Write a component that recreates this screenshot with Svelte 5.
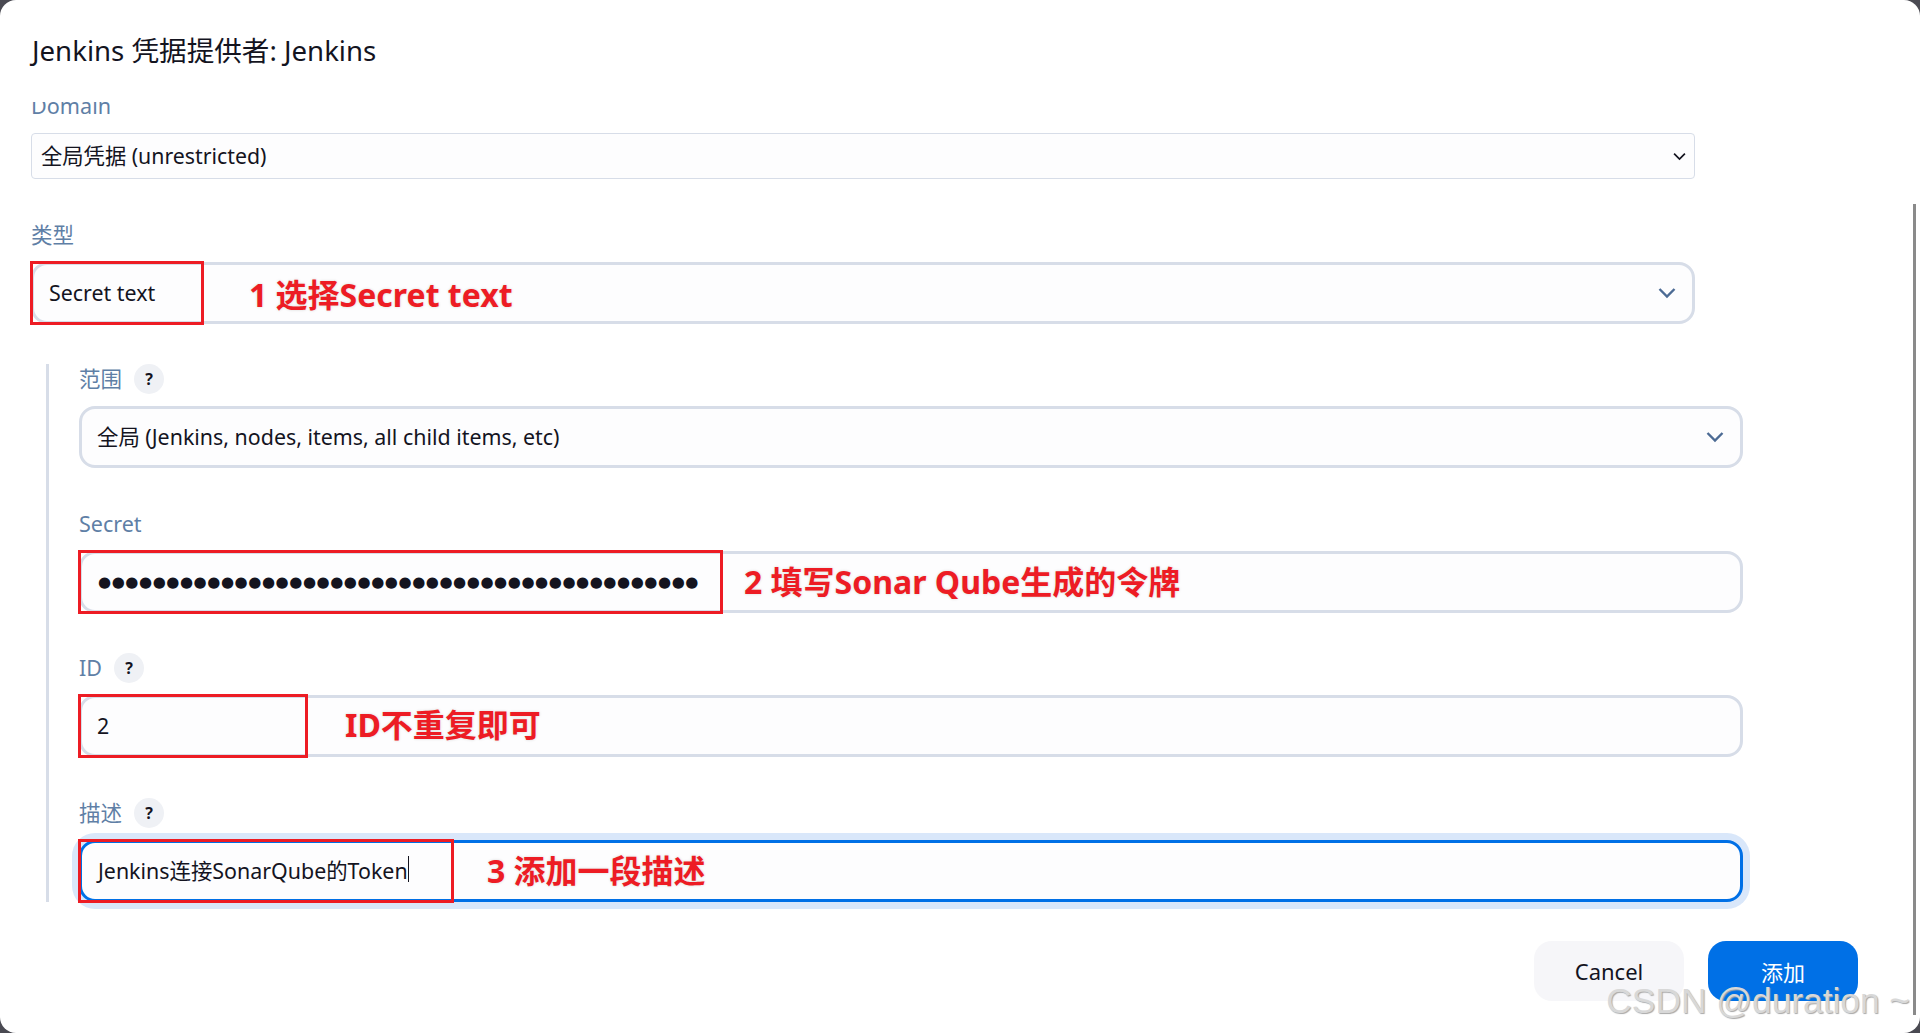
<script lang="ts">
  // Dialog form: plain data for the scoped fields, annotations stay in the markup
  const scopeText = '全局 (Jenkins, nodes, items, all child items, etc)';
  const dots = '●'.repeat(44);
</script>

{#snippet chevron(cls)}
  <svg class={cls} viewBox="0 0 18 12" aria-hidden="true">
    <path d="M1.5 2 L9 9.5 L16.5 2" fill="none" stroke="currentColor" stroke-width="2.4" />
  </svg>
{/snippet}

{#snippet help()}
  <span class="help">?</span>
{/snippet}

<div class="dialog">
  <h2 class="title">Jenkins 凭据提供者: Jenkins</h2>

  <div class="scroll">
    <div class="domain-label">Domain</div>
    <div class="native-select">
      <span>全局凭据 (unrestricted)</span>
      {@render chevron('chev-small')}
    </div>

    <div class="label type-label">类型</div>
    <div class="box">
      <div class="control low">
        <span>Secret text</span>
        {@render chevron('chev')}
      </div>
      <div class="mark mark-type"></div>
      <div class="note note-type">1 选择Secret text</div>
    </div>

    <div class="nested">
      <div class="field">
        <div class="label-row"><span class="label">范围</span>{@render help()}</div>
        <div class="box">
          <div class="control">
            <span>{scopeText}</span>
            {@render chevron('chev')}
          </div>
        </div>
      </div>

      <div class="field">
        <div class="label-row"><span class="label">Secret</span></div>
        <div class="box">
          <div class="control"><span class="dots">{dots}</span></div>
          <div class="mark mark-secret"></div>
          <div class="note note-secret">2 填写Sonar Qube生成的令牌</div>
        </div>
      </div>

      <div class="field">
        <div class="label-row"><span class="label">ID</span>{@render help()}</div>
        <div class="box">
          <div class="control low"><span>2</span></div>
          <div class="mark mark-id"></div>
          <div class="note note-id">ID不重复即可</div>
        </div>
      </div>

      <div class="field last">
        <div class="label-row"><span class="label">描述</span>{@render help()}</div>
        <div class="box">
          <div class="control focused"><span>Jenkins连接SonarQube的Token</span><i class="caret"></i></div>
          <div class="mark mark-desc"></div>
          <div class="note note-desc">3 添加一段描述</div>
        </div>
      </div>
    </div>
  </div>

  <div class="actions">
    <button class="btn btn-cancel">Cancel</button>
    <button class="btn btn-primary">添加</button>
  </div>

  <div class="scrollbar"></div>
  <div class="watermark">CSDN @duration ~</div>
</div>

<style>
  :global(body) {
    background: #4a4a52;
    font-family: "Noto Sans", "Noto Sans CJK SC", sans-serif;
    color: #14141f;
  }
  .dialog {
    position: relative;
    display: flex;
    flex-direction: column;
    height: 1033px;
    box-sizing: border-box;
    background: #fff;
    border-radius: 16px;
    overflow: hidden;
  }
  .title {
    margin: 0;
    height: 102px;
    box-sizing: border-box;
    padding: 30px 0 0 32px;
    font-size: 27.6px;
    line-height: 40px;
    font-weight: 400;
  }
  .scroll {
    flex: 1;
    overflow: hidden;
    padding: 0 225px 0 31px;
  }
  .domain-label {
    margin-top: -11px;
    height: 42px;
    font-size: 21.6px;
    line-height: 30px;
    color: #5f7fa6;
  }
  .native-select {
    display: flex;
    align-items: center;
    justify-content: space-between;
    height: 46px;
    box-sizing: border-box;
    padding: 0 8px 3px 9px;
    border: 1.5px solid #d7dde8;
    border-radius: 4px;
    background: #fdfdfe;
    font-size: 21.3px;
  }
  .label {
    font-size: 21.5px;
    line-height: 30px;
    color: #5f7fa6;
  }
  .type-label {
    margin: 41px 0 12px;
    height: 30px;
  }
  .box { position: relative; }
  .control {
    display: flex;
    align-items: center;
    justify-content: space-between;
    height: 62px;
    box-sizing: border-box;
    padding: 0 16px 3px 15px;
    border: 3px solid #d7dde8;
    border-radius: 16px;
    background: #fdfdfe;
    font-size: 21.4px;
  }
  .low { padding-bottom: 1px; }
  .focused {
    justify-content: flex-start;
    padding-left: 16px;
    border-color: #0070e6;
    box-shadow: 0 0 0 7px #d9e7fa;
  }
  .caret {
    width: 1px;
    height: 26px;
    background: #14141f;
  }
  .dots {
    margin: 4px 0 0 1px;
    font-family: "DejaVu Sans", sans-serif;
    font-size: 15px;
    letter-spacing: 0.57px;
  }
  .chev { width: 18px; height: 12px; margin-top: 3px; color: #4c6b94; }
  .low .chev { margin-top: 1px; }
  .chev-small { width: 13px; height: 9px; margin-top: 3px; color: #14141f; }
  .nested {
    margin: 40px -48px 0 15px;
    padding-left: 30px;
    border-left: 3px solid #d7dde8;
  }
  .field { margin-bottom: 40.67px; }
  .field.last { margin-bottom: 0; }
  .label-row {
    display: flex;
    align-items: center;
    gap: 12px;
    height: 30px;
    margin-bottom: 12px;
  }
  .help {
    display: flex;
    align-items: center;
    justify-content: center;
    width: 30px;
    height: 30px;
    border-radius: 50%;
    background: #eff1f5;
    font-size: 16px;
    font-weight: 700;
  }
  .mark {
    position: absolute;
    top: -1px;
    bottom: -1px;
    left: -1px;
    box-sizing: border-box;
    border: 3px solid #ed1c24;
  }
  .mark-type { width: 174px; }
  .mark-secret { width: 645px; }
  .mark-id { width: 230px; }
  .mark-desc { width: 376px; }
  .note {
    position: absolute;
    top: 50%;
    transform: translateY(-50%);
    color: #ed1c24;
    font-size: 32px;
    font-weight: 700;
    line-height: 40px;
    white-space: nowrap;
    text-shadow: 0 0 3px #d8d8d8;
  }
  .note-type { left: 218px; margin-top: 2px; }
  .note-secret { left: 665px; }
  .note-id { left: 266px; margin-top: -1px; }
  .note-desc { left: 408px; }
  .actions {
    display: flex;
    justify-content: flex-end;
    gap: 24px;
    padding: 0 62px 32px 0;
  }
  .btn {
    width: 150px;
    height: 60px;
    border: 0;
    border-radius: 18px;
    font: inherit;
    font-size: 22px;
  }
  .btn-cancel { background: #f6f6f9; color: #14141f; }
  .btn-primary { background: #0070e6; color: #fff; }
  .scrollbar {
    position: absolute;
    top: 204px;
    bottom: 18px;
    right: 4px;
    width: 3px;
    background: #8a8a8a;
  }
  .watermark {
    position: absolute;
    right: 10px;
    bottom: 11px;
    font-family: "Liberation Sans", sans-serif;
    font-size: 35.3px;
    line-height: 42px;
    color: #d8d8d8;
    text-shadow: 1px 1px 1px #a8a8a8;
    white-space: nowrap;
  }
</style>
